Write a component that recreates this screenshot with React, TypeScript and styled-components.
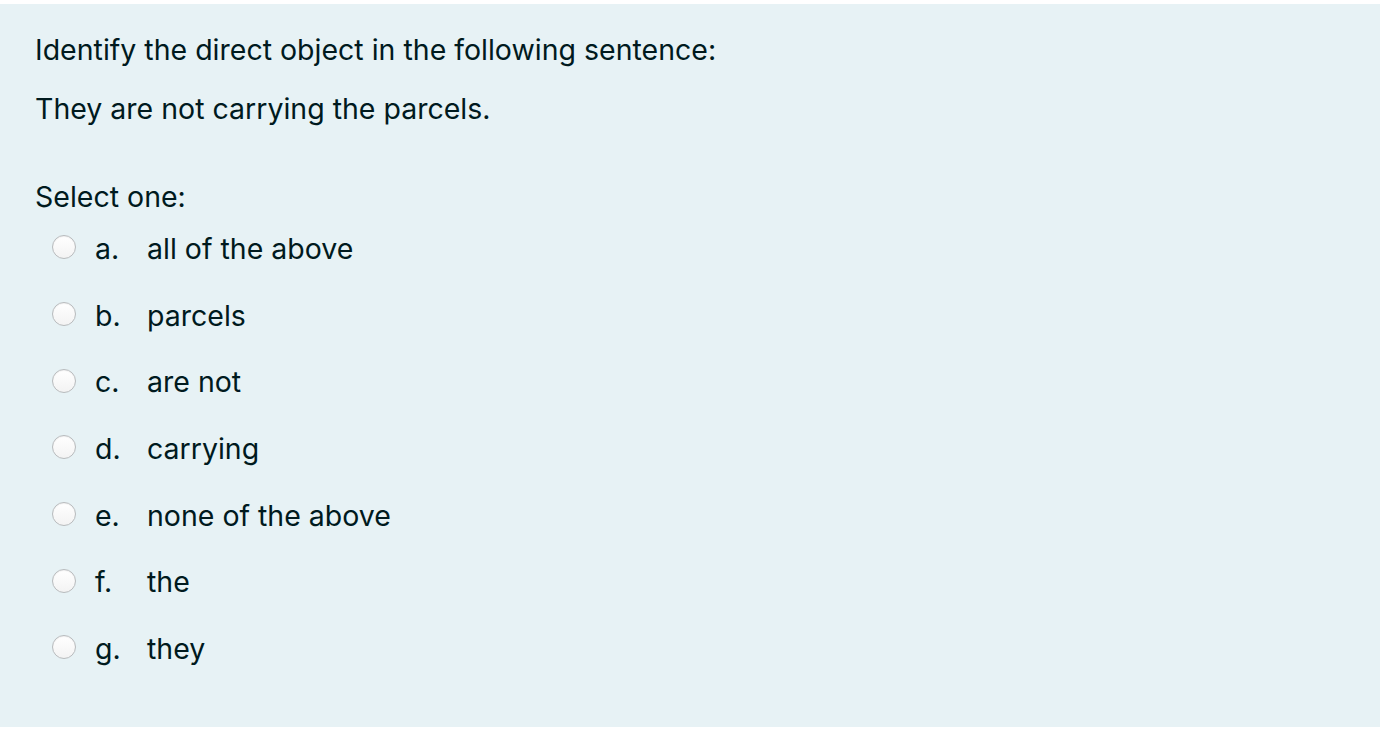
import { createGlobalStyle, styled } from 'styled-components'

const GlobalStyle = createGlobalStyle`
    body {
        margin: 0;
        background: #fff;
        font-family: Inter, "Liberation Sans", Arial, sans-serif;
    }
`

const Formulation = styled.div`
    margin-top: 4px;
    height: 723px;
    box-sizing: border-box;
    background: #e7f2f5;
    color: #001a1e;
    padding: 26px 35px 0;
    font-size: 28.5px;
`

const QText = styled.p<{ $gap?: number }>`
    margin: 0;
    margin-top: ${p => p.$gap ?? 0}px;
    line-height: 40px;
`

const Options = styled.div`
    display: flex;
    flex-direction: column;
    margin-top: -2px;
`

const Option = styled.label`
    display: flex;
    align-items: center;
    height: 66.7px;
    padding-left: 17px;
`

const Radio = styled.span`
    width: 24px;
    height: 24px;
    box-sizing: border-box;
    border-radius: 50%;
    border: 1px solid #b8bbbd;
    background: linear-gradient(#ffffff, #f3f3f3);
    box-shadow: inset 0 1px 1px rgba(0, 0, 0, 0.06);
    margin-right: 19px;
    margin-top: -2px;
    flex: none;
`

const Letter = styled.span`
    width: 52px;
    flex: none;
`

const options = [
    ['a.', 'all of the above'],
    ['b.', 'parcels'],
    ['c.', 'are not'],
    ['d.', 'carrying'],
    ['e.', 'none of the above'],
    ['f.', 'the'],
    ['g.', 'they'],
]

function App() {
    return (
        <>
            <GlobalStyle />
            <Formulation>
                <QText>Identify the direct object in the following sentence:</QText>
                <QText $gap={19}>They are not carrying the parcels.</QText>
                <QText $gap={48}>Select one:</QText>
                <Options>
                    {options.map(([letter, text]) => (
                        <Option key={letter}>
                            <Radio />
                            <Letter>{letter}</Letter>
                            <span>{text}</span>
                        </Option>
                    ))}
                </Options>
            </Formulation>
        </>
    )
}

export default App
